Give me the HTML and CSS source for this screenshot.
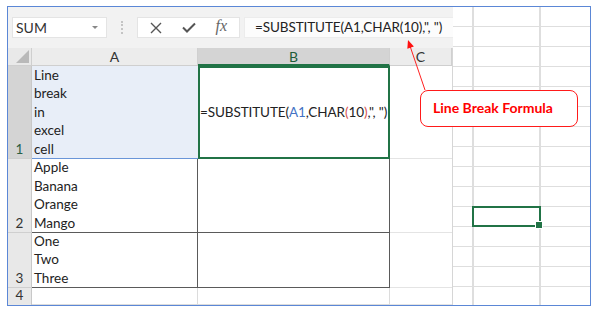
FILE: index.html
```html
<!DOCTYPE html>
<html lang="en">
<head>
	<meta charset="UTF-8">
	<title>Line Break Formula</title>
	<link rel="stylesheet" href="styles.css">
</head>
<body>
	<div class="frame">
		<!-- EXCEL WINDOW -->
		<div class="excel">
			<div class="toolbar">
				<div class="namebox">SUM<span class="caret"></span></div>
				<div class="sep"></div>
				<div class="buttons">
					<svg width="12" height="12" viewBox="0 0 12 12"><path d="M1 1L11 11M11 1L1 11" stroke="#555" stroke-width="1.4" fill="none"/></svg>
					<svg width="14" height="11" viewBox="0 0 14 11"><path d="M1 5.5L5 9.5L13 1.5" stroke="#555" stroke-width="2" fill="none"/></svg>
					<span class="fx">fx</span>
				</div>
				<div class="formula">=SUBSTITUTE(A1,CHAR(10),", ")</div>
			</div>

			<div class="sheet">
				<div class="corner"><span class="tri"></span></div>
				<div class="colhead">A</div>
				<div class="colhead active">B</div>
				<div class="colhead">C</div>

				<div class="rowhead active">1</div>
				<div class="cell a1">Line<br>break<br>in<br>excel<br>cell</div>
				<div class="cell b1"><span class="f">=SUBSTITUTE(<span class="ref">A1</span>,CHAR<span class="par">(</span>10<span class="par">)</span>,", ")</span><span class="cursor"></span></div>
				<div class="cell c"></div>

				<div class="rowhead">2</div>
				<div class="cell dark">Apple<br>Banana<br>Orange<br>Mango</div>
				<div class="cell dark"></div>
				<div class="cell c"></div>

				<div class="rowhead">3</div>
				<div class="cell dark">One<br>Two<br>Three</div>
				<div class="cell dark"></div>
				<div class="cell c"></div>

				<div class="rowhead last">4</div>
				<div class="cell"></div>
				<div class="cell"></div>
				<div class="cell c"></div>
			</div>
		</div>

		<!-- BLANK GRID ON THE RIGHT -->
		<div class="grid2">
			<div class="sel"></div>
		</div>

		<!-- CALLOUT -->
		<svg class="arrow" width="582" height="298">
			<line x1="417" y1="83" x2="402" y2="39" stroke="#ff2020" stroke-width="1"/>
			<polygon points="400,33 405.9,39.5 399.3,41.7" fill="#ff1010"/>
		</svg>
		<div class="callout">Line Break Formula</div>
	</div>
</body>
</html>
```

FILE: styles.css
```css
* {
	margin: 0;
	padding: 0;
	box-sizing: border-box;
}

body {
	background: #fff;
	font-family: 'Lato', 'Liberation Sans', sans-serif;
	font-size: 13.5px;
	color: #222;
}

.frame {
	margin: 6px 0 0 7px;
	width: 584px;
	height: 300px;
	border: 1px solid #5b87d6;
	display: flex;
	position: relative;
	overflow: hidden;
}

/* EXCEL WINDOW */
.excel {
	width: 445px;
	display: flex;
	flex-direction: column;
}

.toolbar {
	height: 41px;
	flex-shrink: 0;
	background: #f2f2f2;
	display: flex;
	align-items: flex-start;
	padding: 10px 0 0 4px;
}

.namebox {
	width: 95px;
	height: 21px;
	background: #fff;
	border: 1px solid #e4e4e4;
	display: flex;
	align-items: center;
	justify-content: space-between;
	padding: 0 8px 0 3px;
	color: #333;
	font-size: 14px;
}

.caret {
	width: 0;
	height: 0;
	border-left: 3px solid transparent;
	border-right: 3px solid transparent;
	border-top: 3px solid #888;
}

.sep {
	width: 3px;
	height: 13px;
	margin: 4px 0 0 14px;
	border-left: 2px dotted #c4c4c4;
}

.buttons {
	width: 103px;
	height: 21px;
	margin-left: 13px;
	background: #fff;
	border: 1px solid #e4e4e4;
	display: flex;
	align-items: center;
	justify-content: space-between;
	padding: 0 12px 0 12px;
}

.fx {
	font-family: 'Liberation Serif', serif;
	font-style: italic;
	font-size: 16px;
	color: #666;
	margin-top: -3px;
}

.formula {
	flex: 1;
	height: 21px;
	margin-left: 4px;
	background: #fcfcfc;
	border: 1px solid #ececec;
	border-right: none;
	padding-left: 10px;
	line-height: 19px;
	white-space: nowrap;
	overflow: hidden;
	letter-spacing: -0.1px;
}

/* SHEET */
.sheet {
	flex: 1;
	min-height: 0;
	overflow: hidden;
	display: grid;
	grid-template-columns: 24px 166px 192px 1fr;
	grid-template-rows: 18px 93px 74px 55px minmax(0, 1fr);
	border-right: 1px solid #d6d6d6;
}

.corner {
	background: #e9e9e9;
	border-right: 1px solid #cfcfcf;
	border-bottom: 1px solid #cfcfcf;
	position: relative;
}

.tri {
	position: absolute;
	right: 2px;
	bottom: 2px;
	width: 0;
	height: 0;
	border-left: 13px solid transparent;
	border-bottom: 13px solid #b9b9b9;
}

.colhead {
	background: #ececec;
	border-right: 1px solid #d0d0d0;
	border-bottom: 1px solid #cfcfcf;
	text-align: center;
	line-height: 18px;
	color: #333;
	font-size: 14px;
}

.colhead.active {
	background: #d4d4d4;
	border-bottom: 2px solid #217346;
	color: #1e5d3a;
}

.rowhead {
	background: #e8e8e8;
	border-right: 1px solid #c8c8c8;
	border-bottom: 1px solid #cfcfcf;
	display: flex;
	align-items: flex-end;
	justify-content: center;
	line-height: 18.5px;
	color: #333;
	overflow: hidden;
}

.rowhead.active {
	background: #d4d4d4;
	color: #2a5f44;
}

.rowhead.last {
	align-items: flex-start;
	line-height: 15px;
	border-bottom: none;
}

.cell {
	border-right: 1px solid #dcdcdc;
	border-bottom: 1px solid #dcdcdc;
	padding-left: 2px;
	line-height: 18.5px;
	display: flex;
	align-items: flex-end;
	overflow: hidden;
}

.cell.c {
	border-right: none;
	border-bottom-color: #e4e4e4;
}

.cell.dark {
	border-right-color: #5a5a5a;
	border-bottom-color: #5a5a5a;
}

.a1 {
	background: #e8eef8;
	border-bottom: 1px solid #6a95d8;
	border-right: none;
}

.b1 {
	border: 2px solid #217346;
	align-items: center;
	padding-left: 0;
	white-space: nowrap;
}

.f {
	letter-spacing: -0.1px;
}

.ref {
	color: #4472c4;
}

.par {
	color: #d9534f;
}

.cursor {
	width: 1px;
	height: 17px;
	background: #111;
	margin-left: 1px;
}

/* RIGHT GRID */
.grid2 {
	flex: 1;
	display: grid;
	grid-template-columns: 20px 67px 1fr;
	grid-auto-rows: 20px;
	background:
		linear-gradient(to right, transparent 19px, #dedede 19px, #dedede 21px, transparent 21px),
		linear-gradient(to right, transparent 86px, #dedede 86px, #dedede 88px, transparent 88px),
		repeating-linear-gradient(to bottom, transparent 0, transparent 19px, #dedede 19px, #dedede 20px);
}

.sel {
	grid-row: 11;
	grid-column: 2;
	border: 2px solid #217346;
	margin: -1px -1px 0 -1px;
	height: 21px;
	position: relative;
}

.sel::after {
	content: "";
	position: absolute;
	right: -4px;
	bottom: -4px;
	width: 6px;
	height: 6px;
	background: #217346;
	border: 1px solid #fff;
}

/* CALLOUT */
.arrow {
	position: absolute;
	left: 0;
	top: 0;
	pointer-events: none;
}

.callout {
	position: absolute;
	left: 412px;
	top: 83px;
	width: 158px;
	height: 37px;
	background: #fff;
	border: 1.5px solid #ff1a1a;
	border-radius: 8px;
	color: #ff0000;
	font-weight: bold;
	font-size: 14px;
	line-height: 34px;
	padding-left: 12px;
}
```
